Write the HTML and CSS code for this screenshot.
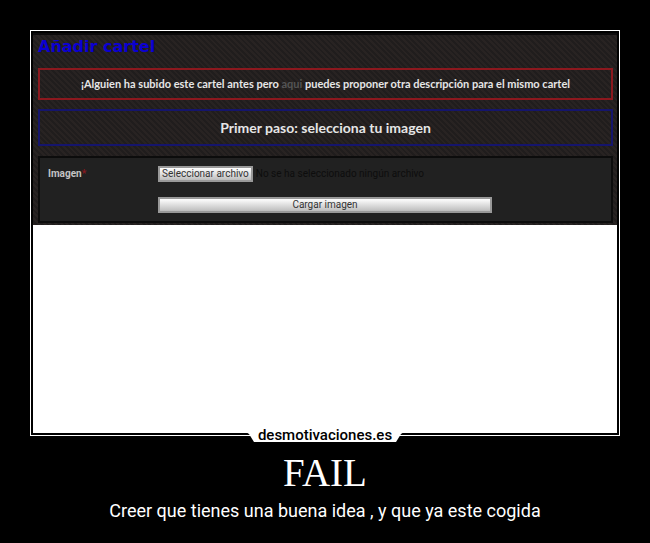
FILE: index.html
```
<!DOCTYPE html>
<html lang="es">
<head>
    <meta charset="UTF-8">
    <meta name="viewport" content="width=device-width, initial-scale=1.0">
    <title>FAIL - desmotivaciones.es</title>
    <link rel="stylesheet" href="styles.css">
</head>
<body>
    <main class="poster">
        <div class="frame">
            <div class="picture">
                <section class="panel">
                    <h2 class="panel-title">Añadir cartel</h2>
                    <p class="box notice">¡Alguien ha subido este cartel antes pero <a href="#">aqui</a> puedes proponer otra descripción para el mismo cartel</p>
                    <h3 class="box step">Primer paso: selecciona tu imagen</h3>
                    <form class="upload">
                        <label class="upload-label" for="image">Imagen<span class="required">*</span></label>
                        <div class="upload-fields">
                            <div class="file-row">
                                <input type="file" id="image" hidden>
                                <button type="button" class="btn" onclick="document.getElementById('image').click()">Seleccionar archivo</button>
                                <span class="file-name">No se ha seleccionado ningún archivo</span>
                            </div>
                            <button type="button" class="btn btn-wide">Cargar imagen</button>
                        </div>
                    </form>
                </section>
            </div>
            <div class="brand">
                <svg class="brand-tab" viewBox="0 0 158 13" aria-hidden="true">
                    <path d="M0 0H158V3L155 5L150 13H8L3 5L0 3Z" fill="#fff"/>
                </svg>
                <span class="brand-name">desmotivaciones.es</span>
            </div>
        </div>
        <h1 class="title">FAIL</h1>
        <p class="caption">Creer que tienes una buena idea , y que ya este cogida</p>
    </main>
</body>
</html>
```
FILE: styles.css
```
* {
    box-sizing: border-box;
}
body {
    margin: 0;
    min-height: 100vh;
    background: #000;
    color: #fff;
    font-family: Roboto, sans-serif;
}
h1, h2, h3, p {
    margin: 0;
}
.poster {
    padding: 30px 30px 20px;
    text-align: center;
}

/* Marco */
.frame {
    position: relative;
    padding: 2px;
    border: 1px solid #fff;
}
.picture {
    padding-bottom: 208px;
    background: #fff;
}
.brand {
    position: absolute;
    left: 50%;
    bottom: -7px;
    width: 158px;
    height: 16px;
    transform: translateX(-50%);
}
.brand-tab {
    position: absolute;
    left: 0;
    bottom: 0;
    width: 158px;
    height: 13px;
}
.brand-name {
    position: relative;
    display: block;
    color: #000;
    font-size: 15px;
    font-weight: 500;
    line-height: 18px;
}

/* Formulario */
.panel {
    display: flex;
    flex-direction: column;
    padding: 4px 4px 2px 5px;
    border-top: 2px solid #0c0b0c;
    background: repeating-linear-gradient(45deg, #282322 0, #282322 2px, #201d1d 2px, #201d1d 4px);
}
.panel-title {
    color: #0b00d2;
    font-family: "DejaVu Sans", sans-serif;
    font-size: 16px;
    line-height: 16px;
    text-align: left;
}
.box {
    border: 2px solid #8c181e;
    color: #e6e6e6;
    font-family: Lato, sans-serif;
    font-weight: bold;
}
.notice {
    margin-top: 13px;
    padding: 6px;
    font-size: 11px;
    line-height: 16px;
}
.notice a {
    color: #555;
    text-decoration: none;
}
.step {
    margin-top: 9px;
    padding: 8px;
    border-color: #15156c;
    font-size: 14px;
    line-height: 17px;
}
.upload {
    display: flex;
    margin-top: 10px;
    padding: 8px;
    border: 2px solid #0c0c0c;
    background: #212121;
    text-align: left;
}
.upload-label {
    width: 110px;
    color: #c4c4c4;
    font-size: 10px;
    font-weight: bold;
    line-height: 16px;
}
.required {
    color: #8c181e;
}
.upload-fields {
    display: flex;
    flex-direction: column;
    flex: 0 1 334px;
    gap: 15px;
}
.file-row {
    display: flex;
    align-items: center;
    gap: 3px;
}
.btn {
    height: 16px;
    padding: 0 2px;
    border: 2px solid #999;
    border-radius: 0;
    background: linear-gradient(#fff, #bdbdbd);
    color: #333;
    font-family: Roboto, sans-serif;
    font-size: 10px;
    line-height: 12px;
    white-space: nowrap;
    cursor: pointer;
}
.btn-wide {
    width: 100%;
}
.file-name {
    color: #0d0d0d;
    font-size: 10px;
    line-height: 16px;
    white-space: nowrap;
}

/* Texto del cartel */
.title {
    margin-top: 15px;
    font-family: "Liberation Serif", serif;
    font-size: 39px;
    font-weight: normal;
    line-height: 44px;
}
.caption {
    margin-top: 6px;
    font-size: 18px;
    line-height: 20px;
}
```
